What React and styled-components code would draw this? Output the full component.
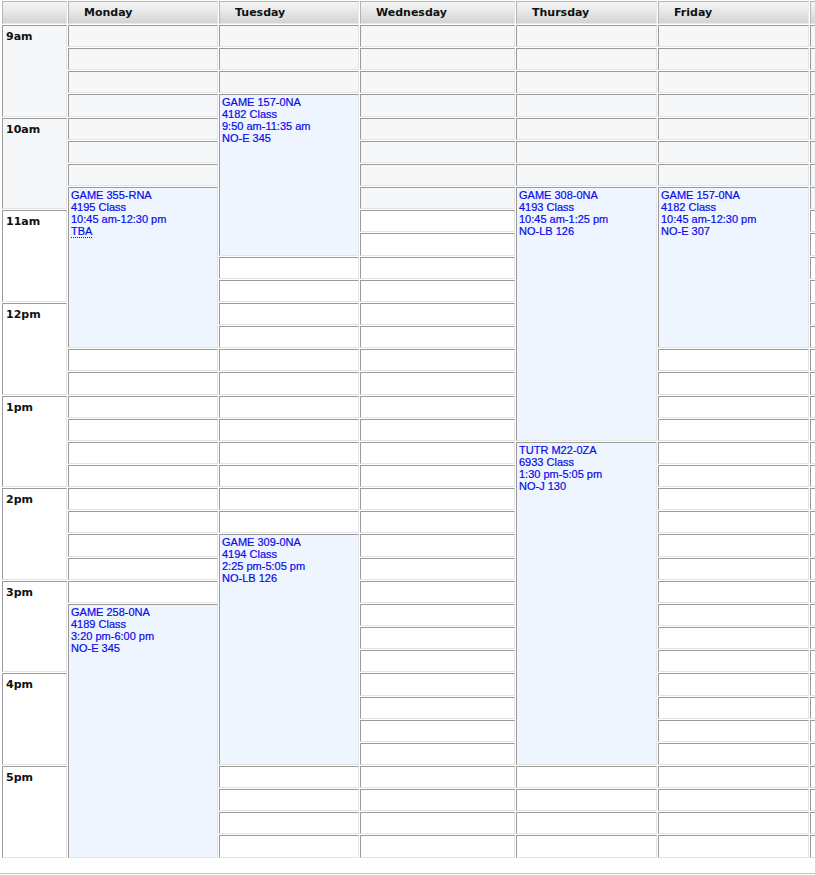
import styled, { createGlobalStyle } from "styled-components";

const GlobalStyle = createGlobalStyle`
  html, body {
    margin: 0;
    padding: 0;
    background: #fff;
    overflow: hidden;
  }
`;

// sixth column runs past the window edge, its label is never seen
const days = [
  { name: "Monday", width: 150 },
  { name: "Tuesday", width: 140 },
  { name: "Wednesday", width: 155 },
  { name: "Thursday", width: 141 },
  { name: "Friday", width: 151 },
  { name: "", width: 150 },
];

const hours = ["9am", "10am", "11am", "12pm", "1pm", "2pm", "3pm", "4pm", "5pm"];

// start = quarter-hour row index from 9am, span = rows covered
const events = [
  { day: 0, start: 7, span: 7, lines: ["GAME 355-RNA", "4195 Class", "10:45 am-12:30 pm"], room: "TBA", tba: true },
  { day: 0, start: 25, span: 11, lines: ["GAME 258-0NA", "4189 Class", "3:20 pm-6:00 pm"], room: "NO-E 345" },
  { day: 1, start: 3, span: 7, lines: ["GAME 157-0NA", "4182 Class", "9:50 am-11:35 am"], room: "NO-E 345" },
  { day: 1, start: 22, span: 10, lines: ["GAME 309-0NA", "4194 Class", "2:25 pm-5:05 pm"], room: "NO-LB 126" },
  { day: 3, start: 7, span: 11, lines: ["GAME 308-0NA", "4193 Class", "10:45 am-1:25 pm"], room: "NO-LB 126" },
  { day: 3, start: 18, span: 14, lines: ["TUTR M22-0ZA", "6933 Class", "1:30 pm-5:05 pm"], room: "NO-J 130" },
  { day: 4, start: 7, span: 7, lines: ["GAME 157-0NA", "4182 Class", "10:45 am-12:30 pm"], room: "NO-E 307" },
];

const ROWS = hours.length * 4;

function Schedule() {
  const rows = [];
  for (let i = 0; i < ROWS; i++) {
    const cells = [];
    if (i % 4 === 0) {
      cells.push(
        <TimeCell key="t" rowSpan={4} $tint={i < 8}>
          {hours[i / 4]}
        </TimeCell>
      );
    }
    days.forEach((d, di) => {
      const ev = events.find((e) => e.day === di && e.start === i);
      if (ev) {
        cells.push(
          <EventCell key={di} rowSpan={ev.span}>
            {ev.lines.map((l) => (
              <div key={l}>{l}</div>
            ))}
            <div>{ev.tba ? <Tba title="To be announced">{ev.room}</Tba> : ev.room}</div>
          </EventCell>
        );
        return;
      }
      const covered = events.some((e) => e.day === di && i > e.start && i < e.start + e.span);
      if (!covered) cells.push(<Slot key={di} $tint={i < 8} />);
    });
    rows.push(<Row key={i}>{cells}</Row>);
  }

  return (
    <Table>
      <thead>
        <tr>
          <HeadCell $w={65} />
          {days.map((d, di) => (
            <HeadCell key={di} $w={d.width}>
              {d.name}
            </HeadCell>
          ))}
        </tr>
      </thead>
      <tbody>{rows}</tbody>
    </Table>
  );
}

export default function App() {
  return (
    <>
      <GlobalStyle />
      <Wrap>
        <Schedule />
        <Footer />
      </Wrap>
    </>
  );
}

/* styled-components */

const Wrap = styled.div`
  width: 815px;
  overflow: hidden;
`;

const Table = styled.table`
  border-collapse: separate;
  border-spacing: 1px;
  table-layout: fixed;
  width: 960px;
  margin: 0 0 0 1px;
`;

const cellBorder = `
  border: 1px solid;
  border-color: #9a9a9a #e4e4e4 #e4e4e4 #9a9a9a;
  box-sizing: border-box;
`;

const HeadCell = styled.th`
  ${cellBorder}
  border-color: #b4b4b4 #e8e8e8 #e8e8e8 #b4b4b4;
  width: ${(p) => p.$w}px;
  height: 23px;
  padding: 0 0 0 15px;
  text-align: left;
  background: linear-gradient(to bottom, #f5f5f5 0%, #e6e6e6 50%, #d3d3d3 100%);
  font: bold 11px "DejaVu Sans", Verdana, sans-serif;
  color: #111;
  white-space: nowrap;
  overflow: hidden;
`;

const Row = styled.tr`
  height: 22.17px;
`;

const Slot = styled.td`
  ${cellBorder}
  padding: 0;
  background: ${(p) => (p.$tint ? "#f6f7f9" : "#ffffff")};
`;

const TimeCell = styled.td`
  ${cellBorder}
  vertical-align: top;
  padding: 4px 3px;
  background: ${(p) => (p.$tint ? "#f6f7f9" : "#ffffff")};
  font: bold 11px "DejaVu Sans", Verdana, sans-serif;
  color: #111;
`;

const EventCell = styled.td`
  ${cellBorder}
  vertical-align: top;
  padding: 1px 2px;
  background: #eef5ff;
  font: 11px/12px "Liberation Sans", Arial, sans-serif;
  color: #0a0ae8;
  -webkit-text-stroke: 0.2px #0a0ae8;
  white-space: nowrap;
  overflow: hidden;
`;

const Tba = styled.abbr`
  text-decoration: none;
  border-bottom: 1px dotted #0a0ae8;
`;

const Footer = styled.div`
  margin-top: 14px;
  height: 10px;
  border-top: 1px solid #a9c8e4;
`;
